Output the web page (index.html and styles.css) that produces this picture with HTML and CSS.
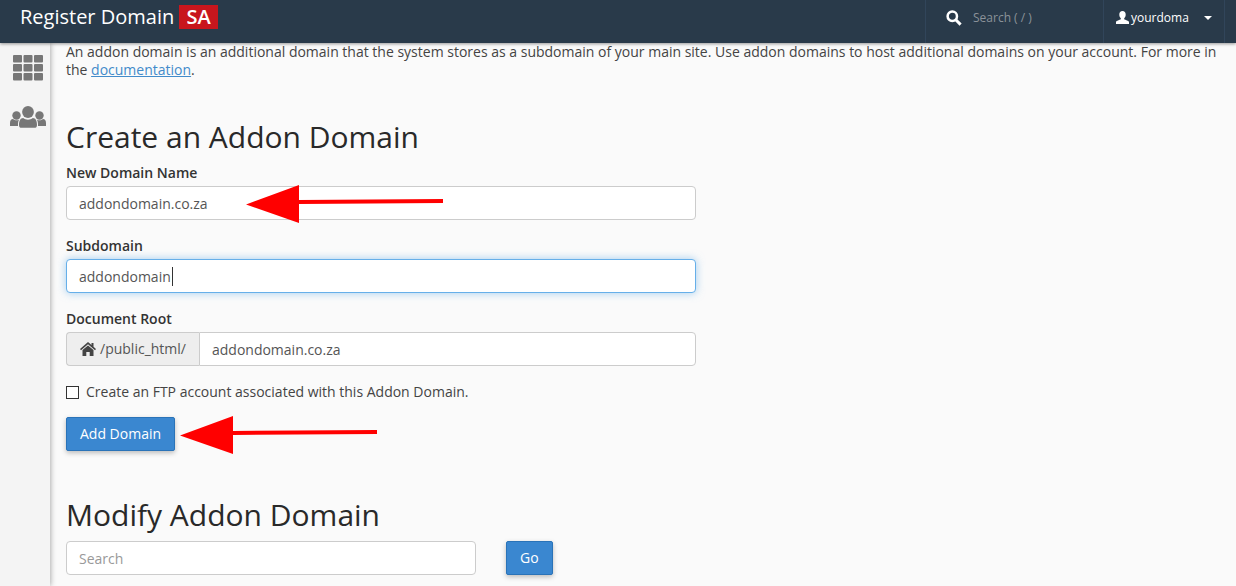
FILE: index.html
```
<!DOCTYPE html>
<html lang="en">
<head>
    <meta charset="UTF-8">
    <meta name="viewport" content="width=device-width, initial-scale=1.0">
    <title>Addon Domains</title>
    <link rel="stylesheet" href="styles.css">
</head>
<body>
<header class="navbar">
    <a class="brand" href="#">Register Domain <span class="brand-tag">SA</span></a>
    <label class="nav-search">
        <svg class="icon-search" viewBox="0 0 16 16" width="16" height="16"><circle cx="6.3" cy="6.3" r="4.7" fill="none" stroke="#fff" stroke-width="2.5"/><path d="M10 10l4.6 4.6" stroke="#fff" stroke-width="3"/></svg>
        <input type="text" placeholder="Search ( / )" aria-label="Search">
    </label>
    <button class="nav-user" type="button">
        <svg viewBox="0 0 13 13" width="13" height="13"><path fill="#fff" d="M6.500 0C4.500 0 3.300 1.300 3.300 3.500c0 1.600.6 3 1.500 3.800v1C3.800 9 .3 9.700 0 11v2h13v-2c-.3-1.300-3.800-2-4.800-2.700v-1c.9-.8 1.500-2.200 1.500-3.800C9.700 1.300 8.500 0 6.500 0z"/></svg>
        <span>yourdoma</span>
        <span class="caret"></span>
    </button>
</header>
<div class="wrap">
    <nav class="sidebar">
        <a href="#" aria-label="Tools">
            <svg viewBox="0 0 30 26" width="30" height="26" fill="#777">
                <rect x="0" y="0" width="9" height="7.500" rx="1"/><rect x="10.500" y="0" width="9" height="7.500" rx="1"/><rect x="21" y="0" width="9" height="7.500" rx="1"/>
                <rect x="0" y="9" width="9" height="7.500" rx="1"/><rect x="10.500" y="9" width="9" height="7.500" rx="1"/><rect x="21" y="9" width="9" height="7.500" rx="1"/>
                <rect x="0" y="18" width="9" height="7.500" rx="1"/><rect x="10.500" y="18" width="9" height="7.500" rx="1"/><rect x="21" y="18" width="9" height="7.500" rx="1"/>
            </svg>
        </a>
        <a href="#" aria-label="User manager">
            <svg viewBox="0 0 36 22" width="36" height="22" fill="#777">
                <circle cx="6.500" cy="9.500" r="4.200"/>
                <circle cx="29.500" cy="9.500" r="4.200"/>
                <path d="M0 20v-3c0-2.500 1.200-4 3-4 1 .9 2.200 1.300 3.500 1.300 1 0 1.800-.2 2.600-.6C8.300 15 8 16.500 8 18v2zM36 20v-3c0-2.500-1.200-4-3-4-1 .9-2.200 1.300-3.500 1.300-1 0-1.800-.2-2.600-.6.8 1.300 1.100 2.800 1.100 4.300v2z"/>
                <circle cx="18" cy="6" r="5.900"/>
                <path d="M9 19c0-4.200 1.400-7 4.200-7 1.400 1.100 3 1.700 4.800 1.700s3.400-.6 4.800-1.700c2.800 0 4.200 2.800 4.200 7 0 2-1 2.800-2.500 2.800h-13C10 21.800 9 21 9 19z"/>
            </svg>
        </a>
    </nav>
    <main class="content">
        <p class="intro">An addon domain is an additional domain that the system stores as a subdomain of your main site. Use addon domains to host additional domains on your account. For more in<br>the <a href="#">documentation</a>.</p>

        <h2>Create an Addon Domain</h2>
        <form class="add-form">
            <div class="form-group">
                <label for="domain">New Domain Name</label>
                <div class="field">
                    <input class="form-control" id="domain" type="text" value="addondomain.co.za">
                    <svg class="arrow arrow-domain" viewBox="0 0 198 38" width="198" height="38" fill="#f00"><path d="M0 18.500L53 -1v15l144-1v4l-144 1v19z"/></svg>
                </div>
            </div>
            <div class="form-group">
                <label for="subdomain">Subdomain</label>
                <div class="field">
                    <input class="form-control active" id="subdomain" type="text" value="addondomain">
                    <span class="text-cursor"></span>
                </div>
            </div>
            <div class="form-group">
                <label for="root">Document Root</label>
                <div class="input-group">
                    <span class="addon">
                        <svg viewBox="0 0 16 14" width="16" height="14" fill="#444"><path d="M8 0l3.500 3V1h2v3.800L16 7l-1 1.200L8 2.300 1 8.200 0 7z"/><path d="M8 3.500l5.500 4.600V14H9.700v-4H6.300v4H2.500V8.100z"/></svg>
                        /public_html/
                    </span>
                    <input class="form-control" id="root" type="text" value="addondomain.co.za">
                </div>
            </div>
            <label class="checkbox"><input type="checkbox"> Create an FTP account associated with this Addon Domain.</label>
            <div class="field field-btn">
                <button class="btn" type="button">Add Domain</button>
                <svg class="arrow arrow-btn" viewBox="0 0 198 38" width="198" height="38" fill="#f00"><path d="M0 18.500L53 -1v15l144-1v4l-144 1v19z"/></svg>
            </div>
        </form>

        <h2>Modify Addon Domain</h2>
        <form class="search-form">
            <input class="form-control" type="text" placeholder="Search" aria-label="Search addon domains">
            <button class="btn" type="button">Go</button>
        </form>
    </main>
</div>
</body>
</html>
```
FILE: styles.css
```
*{ box-sizing: border-box;}
body{
    margin: 0;
    background: #fafafa;
    color: #444;
    font: 14px/18px "Open Sans", sans-serif;
}
input,button{ font: inherit; color: inherit;}
h2,p{ margin: 0;}
svg{ display: block; flex: none; overflow: visible;}

.navbar{
    position: relative;
    z-index: 2;
    display: flex;
    height: 43px;
    padding-right: 11px;
    background: #293a4a;
    box-shadow: 0 1px 3px rgba(0,0,0,.4);
    color: #fff;
}
.brand{
    margin-right: auto;
    padding: 5px 0 0 20px;
    color: #fff;
    font-size: 20px;
    line-height: 24px;
    text-decoration: none;
    white-space: nowrap;
}
.brand-tag{
    display: inline-block;
    padding: 0 7px;
    background: #c8161d;
    font-weight: 600;
}
.nav-search{
    display: flex;
    align-items: center;
    gap: 11px;
    width: 178px;
    padding: 0 10px 8px 20px;
    border-left: 1px solid #31455a;
}
.nav-search input{
    width: 100px;
    padding: 0;
    border: 0;
    outline: 0;
    background: none;
    font-size: 12px;
}
.nav-search input::placeholder{ color: #8b9299; opacity: 1;}
.nav-user{
    display: flex;
    align-items: center;
    gap: 2px;
    width: 122px;
    padding: 0 12px 8px;
    border: solid #31455a;
    border-width: 0 1px;
    background: none;
    font-size: 12px;
}
.caret{
    margin-left: auto;
    border: 4px solid transparent;
    border-top-color: #fff;
    border-bottom: 0;
}

.wrap{
    display: flex;
    min-height: calc(100vh - 43px);
}
.sidebar{
    display: flex;
    flex: none;
    flex-direction: column;
    align-items: center;
    gap: 25px;
    width: 50px;
    padding: 12px 0 0 6px;
    background: #f4f4f4;
    box-shadow: 0 0 6px rgba(0,0,0,.4);
}
.content{
    flex: 1;
    min-width: 0;
    padding: 0 0 11px 16px;
    overflow: hidden;
}
.intro{
    margin-bottom: 41px;
    white-space: nowrap;
}
.intro a{ color: #428bca;}
h2{
    margin-bottom: 10px;
    color: #292929;
    font-size: 30px;
    font-weight: 400;
    line-height: 33px;
}
.add-form{
    max-width: 630px;
    margin-bottom: 47px;
    padding-top: 1px;
}
.form-group{ margin-bottom: 17px;}
.form-group label{
    display: block;
    margin-bottom: 4px;
    color: #333;
    font-weight: 600;
}
.field{ position: relative;}
.form-control{
    display: block;
    width: 100%;
    height: 34px;
    padding: 6px 12px;
    border: 1px solid #ccc;
    border-radius: 4px;
    outline: 0;
    background: #fff;
    color: #555;
}
.form-control::placeholder{ color: #999; opacity: 1;}
.form-control.active{
    border-color: #66afe9;
    box-shadow: 0 0 8px rgba(102,175,233,.6);
}
.text-cursor{
    position: absolute;
    top: 8px;
    left: 106px;
    width: 1px;
    height: 19px;
    background: #333;
}
.input-group{ display: flex;}
.input-group .form-control{ flex: 1; border-radius: 0 4px 4px 0;}
.addon{
    display: flex;
    align-items: center;
    gap: 4px;
    padding: 0 13px;
    border: 1px solid #ccc;
    border-right: 0;
    border-radius: 4px 0 0 4px;
    background: #eee;
    color: #555;
}
.checkbox{
    display: flex;
    align-items: center;
    gap: 7px;
}
.checkbox input{
    width: 13px;
    height: 13px;
    margin: 0;
    border: 1px solid #333;
    background: #fff;
    appearance: none;
}
.field-btn{ margin-top: 16px;}
.btn{
    display: block;
    height: 34px;
    padding: 0 13px;
    border: 1px solid #2a73b8;
    border-radius: 2px;
    background: #3a87d0;
    box-shadow: 0 2px 5px rgba(0,0,0,.25);
    color: #fff;
}
.search-form{
    display: flex;
    gap: 30px;
}
.search-form .form-control{ max-width: 410px;}

.arrow{
    position: absolute;
    top: 0;
}
.arrow-domain{ left: 180px;}
.arrow-btn{ left: 114px;}
```
